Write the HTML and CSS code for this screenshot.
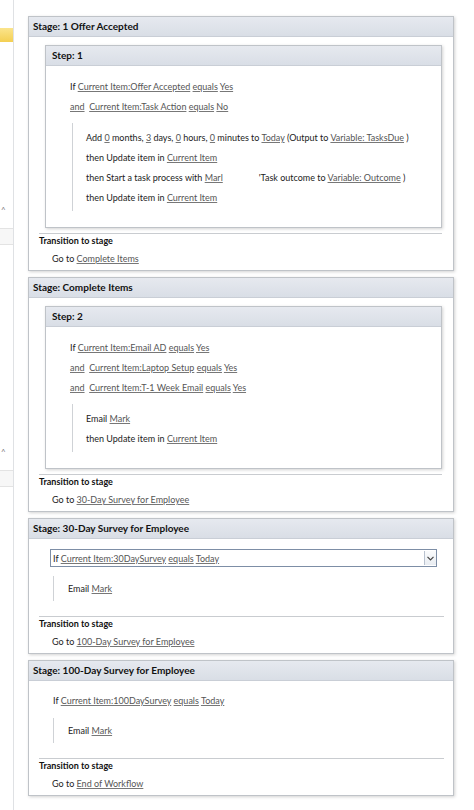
FILE: index.html
```html
<!DOCTYPE html>
<html lang="en">
<head>
    <meta charset="UTF-8">
    <meta name="viewport" content="width=device-width, initial-scale=1.0">
    <title>Workflow Stages</title>
    <link rel="stylesheet" href="styles.css">
</head>
<body>
    <div class="page">
        <div class="sidebar">
            <div class="side-active"></div>
            <div class="side-caret side-caret-1">^</div>
            <div class="side-box"></div>
            <div class="side-caret side-caret-2">^</div>
            <div class="side-box"></div>
        </div>

        <div class="canvas">
            <!-- Stage 1 -->
            <div class="stage">
                <div class="stage-header">Stage: 1 Offer Accepted</div>
                <div class="stage-body">
                    <div class="step">
                        <div class="step-header">Step: 1</div>
                        <div class="step-body">
                            <div class="line">If <a>Current Item:Offer Accepted</a> <a>equals</a> <a>Yes</a></div>
                            <div class="line"><a>and</a> &nbsp;<a>Current Item:Task Action</a> <a>equals</a> <a>No</a></div>
                            <div class="actions">
                                <div class="line">Add <a>0</a> months, <a>3</a> days, <a>0</a> hours, <a>0</a> minutes to <a>Today</a> (Output to <a>Variable: TasksDue</a> )</div>
                                <div class="line">then Update item in <a>Current Item</a></div>
                                <div class="line">then Start a task process with <a>Marl</a><span class="gap"></span>'Task outcome to <a>Variable: Outcome</a> )</div>
                                <div class="line">then Update item in <a>Current Item</a></div>
                            </div>
                        </div>
                    </div>
                    <div class="transition">
                        <div class="transition-title">Transition to stage</div>
                        <div class="line goto">Go to <a>Complete Items</a></div>
                    </div>
                </div>
            </div>

            <!-- Stage 2 -->
            <div class="stage">
                <div class="stage-header">Stage: Complete Items</div>
                <div class="stage-body">
                    <div class="step">
                        <div class="step-header">Step: 2</div>
                        <div class="step-body">
                            <div class="line">If <a>Current Item:Email AD</a> <a>equals</a> <a>Yes</a></div>
                            <div class="line"><a>and</a> &nbsp;<a>Current Item:Laptop Setup</a> <a>equals</a> <a>Yes</a></div>
                            <div class="line"><a>and</a> &nbsp;<a>Current Item:T-1 Week Email</a> <a>equals</a> <a>Yes</a></div>
                            <div class="actions">
                                <div class="line">Email <a>Mark</a></div>
                                <div class="line">then Update item in <a>Current Item</a></div>
                            </div>
                        </div>
                    </div>
                    <div class="transition">
                        <div class="transition-title">Transition to stage</div>
                        <div class="line goto">Go to <a>30-Day Survey for Employee</a></div>
                    </div>
                </div>
            </div>

            <!-- Stage 3 -->
            <div class="stage">
                <div class="stage-header">Stage: 30-Day Survey for Employee</div>
                <div class="stage-body flat">
                    <div class="condition selected">
                        <span>If <a>Current Item:30DaySurvey</a> <a>equals</a> <a>Today</a></span>
                        <span class="dropdown">
                            <svg width="7" height="5" viewBox="0 0 7 5"><path d="M0.5 0.8 L3.5 3.8 L6.5 0.8" fill="none" stroke="#444" stroke-width="1.2"/></svg>
                        </span>
                    </div>
                    <div class="actions flat-actions">
                        <div class="line">Email <a>Mark</a></div>
                    </div>
                    <div class="transition">
                        <div class="transition-title">Transition to stage</div>
                        <div class="line goto">Go to <a>100-Day Survey for Employee</a></div>
                    </div>
                </div>
            </div>

            <!-- Stage 4 -->
            <div class="stage">
                <div class="stage-header">Stage: 100-Day Survey for Employee</div>
                <div class="stage-body flat">
                    <div class="condition">
                        <span>If <a>Current Item:100DaySurvey</a> <a>equals</a> <a>Today</a></span>
                    </div>
                    <div class="actions flat-actions">
                        <div class="line">Email <a>Mark</a></div>
                    </div>
                    <div class="transition">
                        <div class="transition-title">Transition to stage</div>
                        <div class="line goto">Go to <a>End of Workflow</a></div>
                    </div>
                </div>
            </div>
        </div>
    </div>
</body>
</html>
```

FILE: styles.css
```css
body {
    margin: 0;
    font-family: 'Lato', 'Open Sans', sans-serif;
    font-size: 9px;
    color: #222;
    background-color: #fff;
}

.page {
    display: flex;
    height: 810px;
    overflow: hidden;
}

/* left rail */
.sidebar {
    width: 13px;
    flex-shrink: 0;
    border-right: 1px solid #dfe1e4;
    display: flex;
    flex-direction: column;
}

.side-active {
    margin-top: 28px;
    height: 14px;
    background: linear-gradient(#fbe48c, #f4cf52);
}

.side-caret {
    height: 8px;
    font-size: 8px;
    line-height: 8px;
    color: #777;
    padding-left: 1px;
}

.side-caret-1 {
    margin-top: 164px;
}

.side-caret-2 {
    margin-top: 203px;
}

.side-box {
    margin-top: 14px;
    height: 15px;
    border-top: 1px solid #e3e3e3;
    border-bottom: 1px solid #e3e3e3;
    background-color: #f7f7f7;
}

/* workflow canvas */
.canvas {
    padding: 16px 0 0 14px;
    display: flex;
    flex-direction: column;
    gap: 6px;
}

.stage {
    width: 424px;
    border: 1px solid #bfc3c8;
    background-color: #fff;
    box-shadow: 1px 1px 3px rgba(0, 0, 0, 0.18);
}

.stage-header {
    height: 19px;
    line-height: 19px;
    padding-left: 4px;
    font-size: 10px;
    font-weight: bold;
    color: #111;
    background: linear-gradient(#e6e9ef, #d9dee6);
    border-bottom: 1px solid #c9ced6;
}

.stage-body {
    padding: 8px 11px 1px 16px;
}

.step {
    border: 1px solid #bfc3c8;
    box-shadow: 1px 1px 3px rgba(0, 0, 0, 0.18);
}

.step-header {
    height: 19px;
    line-height: 19px;
    padding-left: 6px;
    font-size: 10px;
    font-weight: bold;
    color: #111;
    background: linear-gradient(#e6e9ef, #d9dee6);
    border-bottom: 1px solid #c9ced6;
}

.step-body {
    padding: 11px 10px 16px 24px;
}

.line {
    height: 20px;
    line-height: 20px;
    white-space: nowrap;
}

a {
    color: #555;
    text-decoration: underline;
    text-decoration-color: #777;
}

.actions {
    margin: 6px 0 0 2px;
    padding: 5px 0 3px 13px;
    border-left: 1px solid #cfd2d6;
}

.gap {
    display: inline-block;
    width: 36px;
}

.transition {
    margin: 5px 0 0 -6px;
    border-top: 1px solid #c9ccd0;
}

.transition-title {
    margin-top: 1px;
    height: 12px;
    line-height: 12px;
    font-weight: bold;
    color: #111;
}

.goto {
    margin-top: 2px;
    height: 20px;
    line-height: 20px;
    padding-left: 13px;
}

/* stages without steps */
.stage-body.flat {
    padding: 10px 8px 1px 16px;
}

.condition {
    display: flex;
    align-items: center;
    justify-content: space-between;
    height: 16px;
    margin: 0 8px 0 5px;
    padding-left: 2px;
    border: 1px solid transparent;
}

.condition.selected {
    border-color: #7d8ea6;
}

.dropdown {
    display: flex;
    align-items: center;
    justify-content: center;
    width: 11px;
    height: 14px;
    border-left: 1px solid #b9c2cf;
    background: linear-gradient(#fafbfc, #e9edf2);
}

.flat-actions {
    margin: 9px 0 0 8px;
    padding: 3px 0 2px 14px;
}

.stage-body.flat .transition {
    margin: 15px 1px 0 -6px;
}
```
